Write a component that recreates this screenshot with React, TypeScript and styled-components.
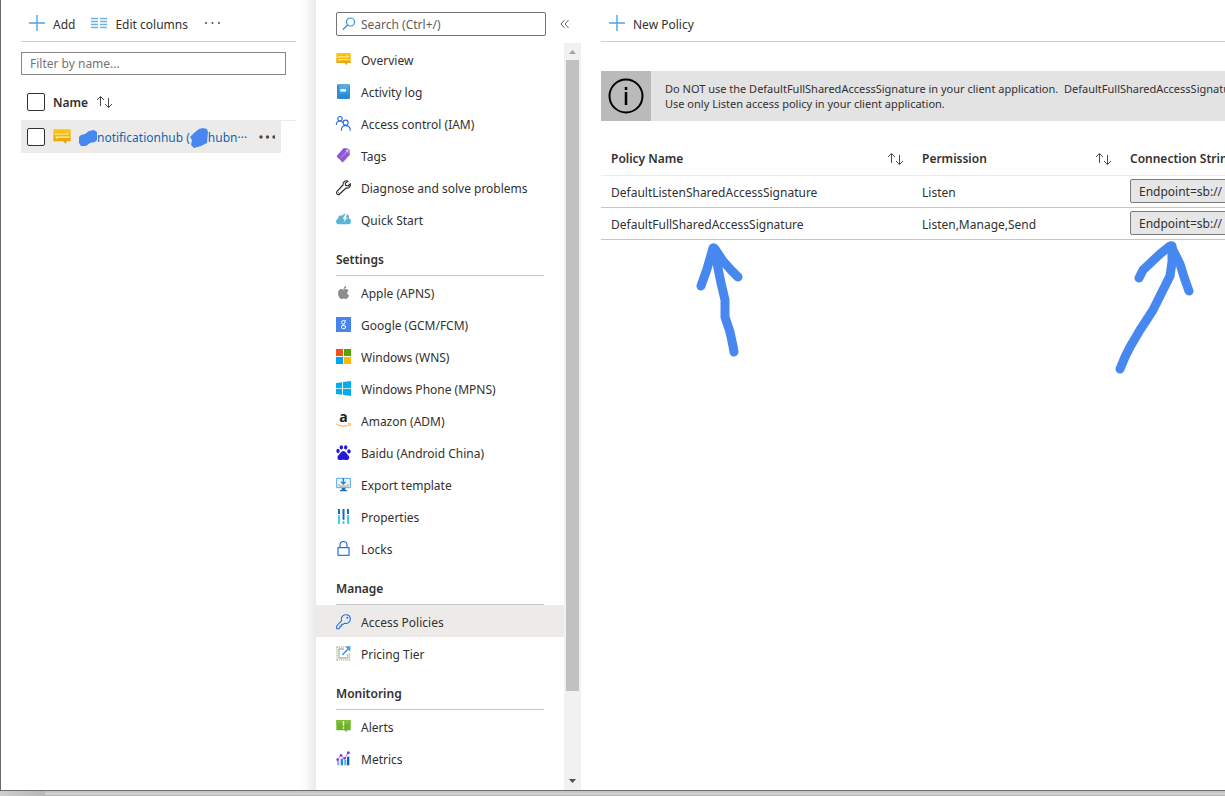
import React from "react";
import styled, { createGlobalStyle } from "styled-components";
import { FaApple } from "react-icons/fa";

const GlobalStyle = createGlobalStyle`
  * { box-sizing: border-box; }
  body {
    margin: 0;
    background: #ffffff;
    color: #323130;
    font-family: "Noto Sans", "Open Sans", sans-serif;
    font-size: 12px;
    line-height: 16px;
    overflow: hidden;
  }
  button, input { font: inherit; color: inherit; }
`;

const Desktop = styled.div`
  display: flex;
  flex-direction: column;
  height: 100vh;
`;

const Portal = styled.div`
  position: relative;
  display: flex;
  flex: 1;
  min-height: 0;
  overflow: hidden;
  border-left: 1px solid #6a6a6a;
  border-bottom: 1px solid #6e6e6e;
`;

const DesktopEdge = styled.div`
  display: flex;
  height: 5px;
  background: linear-gradient(#c2c2c2, #d4d4d4 80%, #b4b4b4 80%);
`;

const EdgeShade = styled.div`
  width: 45px;
  background: linear-gradient(90deg, #cfcfcf, #b6b6b6);
`;

const HubPane = styled.section`
  display: flex;
  flex-direction: column;
  flex: 0 0 315px;
  min-width: 0;
  padding: 0 20px;
  background: linear-gradient(90deg, #ffffff 299px, #fafafa 305px, #e9e9e9 315px);
`;

const Toolbar = styled.div`
  display: flex;
  align-items: center;
  gap: 16px;
  height: 42px;
  padding: 8px 8px 0;
  border-bottom: 1px solid #d2d0ce;
`;

const ToolButton = styled.button`
  display: flex;
  align-items: center;
  gap: 8px;
  padding: 0;
  border: 0;
  background: none;
  white-space: nowrap;
  svg { display: block; flex: none; margin-bottom: 4px; }
`;

const FilterInput = styled.input`
  height: 23px;
  margin: 10px 10px 0 0;
  padding: 0 8px;
  border: 1px solid #8a8886;
  background: #ffffff;
  &::placeholder { color: #767472; opacity: 1; }
`;

const CheckBox = styled.input`
  appearance: none;
  flex: none;
  width: 18px;
  height: 18px;
  margin: 0;
  border: 1px solid #323130;
  border-radius: 2px;
  background: #ffffff;
`;

const HubHeader = styled.div`
  display: flex;
  align-items: center;
  gap: 8px;
  height: 46px;
  padding: 8px 6px 0;
  border-bottom: 1px solid #edebe9;
  font-weight: 600;
`;

const HeaderText = styled.span`
  padding-top: 2px;
`;

const HubRow = styled.div`
  display: flex;
  align-items: center;
  gap: 8px;
  height: 32px;
  margin-right: 15px;
  padding-left: 6px;
  background: #edebe9;
  svg { flex: none; }
`;

const HubLink = styled.a`
  display: flex;
  align-items: center;
  flex: 1;
  min-width: 0;
  height: 24px;
  padding-top: 2px;
  color: #0f66b4;
  text-decoration: none;
  white-space: pre;
`;

const DotsButton = styled.button`
  display: flex;
  flex: none;
  width: 22px;
  padding: 0;
  border: 0;
  background: none;
`;

const NavPane = styled.nav`
  display: flex;
  flex-direction: column;
  flex: 0 0 265px;
  background: #ffffff;
`;

const NavTop = styled.div`
  display: flex;
  align-items: center;
  gap: 14px;
  height: 43px;
  padding: 5px 10px 0 20px;
`;

const SearchBox = styled.label`
  display: flex;
  align-items: center;
  gap: 5px;
  flex: 0 0 210px;
  height: 24px;
  padding: 0 5px;
  border: 1px solid #767472;
  border-radius: 2px;
`;

const SearchInput = styled.input`
  flex: 1;
  min-width: 0;
  padding: 2px 0 0;
  border: 0;
  outline: 0;
  background: none;
  &::placeholder { color: #605e5c; opacity: 1; }
`;

const CollapseButton = styled.button`
  display: flex;
  padding: 0;
  border: 0;
  background: none;
`;

const NavScroll = styled.div`
  display: flex;
  flex: 1;
  min-height: 0;
`;

const NavBody = styled.div`
  flex: 1;
  overflow: hidden;
`;

const NavList = styled.ul`
  margin: 0;
  padding: 0;
  list-style: none;
`;

const NavLink = styled.a<{ $active?: boolean }>`
  display: flex;
  align-items: center;
  gap: 10px;
  height: 32px;
  padding: 3px 0 0 20px;
  color: inherit;
  text-decoration: none;
  background: ${(p) => (p.$active ? "#edebe9" : "transparent")};
  svg { display: block; flex: none; margin-bottom: 2px; overflow: visible; }
`;

const NavHeading = styled.h2`
  height: 41px;
  margin: 0 20px;
  padding-top: 17px;
  border-bottom: 1px solid #c8c6c4;
  font-size: 12px;
  font-weight: 600;
`;

const ScrollTrack = styled.div`
  display: flex;
  flex-direction: column;
  align-items: center;
  flex: 0 0 17px;
  background: #f1f1f1;
`;

const ScrollArrow = styled.svg`
  display: block;
  flex: none;
  width: 17px;
  height: 17px;
`;

const ScrollThumb = styled.div`
  flex: 631;
  width: 13px;
  background: #c1c1c1;
`;

const ScrollRest = styled.div`
  flex: 82;
`;

const MainPane = styled.main`
  flex: 1;
  min-width: 0;
  padding-left: 20px;
  overflow: hidden;
  background: #ffffff;
`;

const Notice = styled.div`
  display: flex;
  height: 50px;
  margin-top: 29px;
  background: #e3e3e3;
`;

const NoticeIcon = styled.div`
  display: flex;
  align-items: center;
  justify-content: center;
  flex: 0 0 50px;
  background: #bababa;
`;

const NoticeText = styled.p`
  margin: 0;
  padding: 10px 14px;
  font-size: 11px;
  line-height: 15px;
  white-space: pre;
`;

const PolicyTable = styled.table`
  width: 100%;
  min-width: 780px;
  margin-top: 20px;
  border-collapse: separate;
  border-spacing: 0;
  table-layout: fixed;
`;

const HeadCell = styled.th<{ $width?: number }>`
  width: ${(p) => (p.$width ? `${p.$width}px` : "auto")};
  height: 35px;
  padding: 2px 9px 0 10px;
  border-bottom: 1px solid #edebe9;
  font-weight: 600;
  text-align: left;
  white-space: nowrap;
`;

const HeadLabel = styled.div`
  display: flex;
  align-items: center;
  justify-content: space-between;
`;

const Cell = styled.td<{ $field?: boolean }>`
  height: 32px;
  padding: ${(p) => (p.$field ? "0 10px 1px" : "2px 10px 0")};
  border-bottom: 1px solid #c8c6c4;
  white-space: nowrap;
`;

const EndpointInput = styled.input`
  display: block;
  width: 100%;
  height: 24px;
  padding: 0 8px;
  border: 1px solid #7c7a78;
  border-radius: 2px;
  background: #e6e6e6;
`;

const PenMarks = styled.svg`
  position: absolute;
  top: 0;
  left: 0;
  pointer-events: none;
`;

/* Icons */

const Icon = ({ children, size = 15 }: { children: React.ReactNode; size?: number }) => (
  <svg width={size} height={size} viewBox="0 0 45 45" fill="none" aria-hidden="true">
    {children}
  </svg>
);

const HubIcon = ({ size = 15 }: { size?: number }) => (
  <Icon size={size}>
    <defs>
      <linearGradient id="hub" x1="0" y1="0" x2="0" y2="1">
        <stop offset="0" stopColor="#fccb05" />
        <stop offset="1" stopColor="#e59a08" />
      </linearGradient>
    </defs>
    <path d="M1 3h43v30H33v7l-8-7H1z" fill="url(#hub)" />
    <path d="M4 15h34M7 23h34" stroke="#fff3c4" strokeWidth="3" />
    <path d="M33 10l6 5M12 28l-6-5" stroke="#fff3c4" strokeWidth="2" />
  </Icon>
);

const LogIcon = () => (
  <Icon>
    <defs>
      <linearGradient id="book" x1="0" y1="0" x2="0" y2="1">
        <stop offset="0" stopColor="#5ab1ec" />
        <stop offset="1" stopColor="#1c84d8" />
      </linearGradient>
    </defs>
    <rect x="3" y="1" width="39" height="44" rx="4" fill="#3b87c8" />
    <rect x="8" y="3" width="32" height="40" rx="2" fill="url(#book)" />
    <rect x="13" y="15" width="17" height="8" fill="#eef8ff" />
  </Icon>
);

const PeopleIcon = () => (
  <Icon>
    <g stroke="#2b6fdc" strokeWidth="3.4">
      <circle cx="12" cy="8" r="6.5" />
      <path d="M1 27c0-8 4-12 11-12 4 0 7 2 9 5" />
      <circle cx="29" cy="20" r="7.5" />
      <path d="M16 44c0-9 4-15 13-15s14 6 14 15" />
    </g>
  </Icon>
);

const TagIcon = () => (
  <Icon>
    <defs>
      <linearGradient id="tag" x1="0" y1="0" x2="1" y2="1">
        <stop offset="0" stopColor="#7a35e0" />
        <stop offset="1" stopColor="#a678d8" />
      </linearGradient>
    </defs>
    <path d="M23 1l15 1 4 5v14L20 44 2 26z" fill="#b18be0" />
    <path d="M23 1l12 1-2 6L10 33l-8-8z" fill="url(#tag)" />
    <path d="M36 12l4 8-20 22-9-9z" fill="#8f5bc8" />
    <circle cx="33" cy="8" r="2.5" fill="#fff" />
  </Icon>
);

const WrenchIcon = () => (
  <Icon>
    <path
      d="M36 3c-8-3-16 3-15 12L3 34c-5 6 3 13 8 8l19-18c8 2 15-5 13-13l-7 7-7-2-1-6z"
      stroke="#2b2b2b"
      strokeWidth="3.4"
      strokeLinejoin="round"
    />
    <circle cx="8" cy="37" r="1.5" fill="#2b2b2b" />
  </Icon>
);

const CloudIcon = () => (
  <Icon>
    <path
      d="M9 37C-1 37-3 23 6 20 6 11 15 7 19 11c4-8 18-8 20 2 0 4 0 5-1 6 10 3 9 18-1 18z"
      fill="#59b4d9"
    />
    <path d="M29 5L20 20h6l-3 11 12-15h-6l5-11z" fill="#ffffff" />
  </Icon>
);

const GoogleIcon = () => (
  <Icon>
    <rect width="45" height="45" fill="#4684ee" />
    <g stroke="#ffffff" strokeWidth="3">
      <ellipse cx="22" cy="16" rx="5" ry="5.5" />
      <path d="M26 11h4M22 22c-3 2 0 3 3 5" />
      <ellipse cx="22.500" cy="30" rx="6.500" ry="5" />
    </g>
  </Icon>
);

const WindowsIcon = () => (
  <Icon>
    <path d="M0 0h21v21H0z" fill="#f25022" />
    <path d="M24 0h21v21H24z" fill="#57a300" />
    <path d="M0 24h21v21H0z" fill="#00a4ef" />
    <path d="M24 24h21v21H24z" fill="#ffb900" />
  </Icon>
);

const PhoneIcon = () => (
  <Icon>
    <path
      d="M0 6l18-2v18H0zM21 3l24-3v22H21zM0 24h18v17L0 39zM21 24h24v21l-24-3z"
      fill="#00adef"
    />
  </Icon>
);

const AmazonLetter = styled.text`
  font: 700 42px "Open Sans", sans-serif;
`;

const AmazonIcon = () => (
  <Icon>
    <AmazonLetter x="10" y="27" fill="#1d1d1d">a</AmazonLetter>
    <path d="M1 33c12 8 27 9 38 2" stroke="#ff9f1c" strokeWidth="3" />
    <path d="M36 32l8 0-2 7" stroke="#ff9f1c" strokeWidth="2.500" />
  </Icon>
);

const BaiduIcon = () => (
  <Icon>
    <g fill="#2319dc">
      <ellipse cx="6" cy="18" rx="5" ry="6.500" />
      <ellipse cx="16" cy="7" rx="5" ry="6.500" />
      <ellipse cx="29" cy="7" rx="5" ry="6.500" />
      <ellipse cx="39" cy="19" rx="5" ry="6.500" />
      <path d="M22 18c7 0 8 7 13 11 7 5 6 16-3 16-4 0-6-1-10-1s-6 1-10 1C3 45 2 34 9 29c5-4 6-11 13-11z" />
    </g>
  </Icon>
);

const ExportIcon = () => (
  <Icon>
    <path d="M2 4h41v28H2z" fill="#e8f4fd" stroke="#5aa9e0" strokeWidth="3" />
    <path d="M22 3v18M15 14l7 7 7-7" stroke="#1f86d6" strokeWidth="4" />
    <path d="M9 21v6h27v-6" stroke="#a6a6a6" strokeWidth="3" />
    <path d="M17 33h11v6h5v4H12v-4h5z" fill="#2271b8" />
  </Icon>
);

const PropertiesIcon = () => (
  <Icon>
    <path d="M6 0h6v15H6zM19.500 0h6v32h-6zM33 0h6v15h-6z" fill="#0f6fc6" />
    <path d="M6 18h6v27H6zM19.500 36h6v9h-6zM33 18h6v27h-6z" fill="#45cdea" />
  </Icon>
);

const LockIcon = () => (
  <Icon>
    <rect x="6" y="20" width="33" height="23" stroke="#1a6ad8" strokeWidth="3.4" />
    <path d="M12 20v-8c0-14 21-14 21 0v8" stroke="#1a6ad8" strokeWidth="3.4" />
  </Icon>
);

const KeyIcon = () => (
  <Icon>
    <path
      d="M17 20C13 9 21 2 30 2c8 0 13 6 13 13 0 9-8 16-18 13l-3 3h-5v5h-5v5l-3 3H2v-8z"
      stroke="#1f6be0"
      strokeWidth="3.2"
      strokeLinejoin="round"
    />
    <circle cx="34" cy="11" r="3" fill="#1f6be0" />
  </Icon>
);

const TierIcon = () => (
  <Icon>
    <path d="M2 3h22M3 3v40M2 42h39M41 22v21" stroke="#8bc34a" strokeWidth="3" strokeDasharray="4 2" />
    <path d="M24 9H9v27h26V24" stroke="#b5b5b5" strokeWidth="4" />
    <path d="M19 27L36 9" stroke="#3a9de6" strokeWidth="5" />
    <path d="M27 1h16v16z" fill="#3a9de6" />
  </Icon>
);

const AlertIcon = () => (
  <Icon>
    <path d="M1 3h43v31H32v6l-7-6H1z" fill="#6fb12b" />
    <path d="M1 3h43v10H1z" fill="#7fbf35" />
    <path d="M22.500 6v15M22.500 25v4" stroke="#ffffff" strokeWidth="4" />
  </Icon>
);

const MetricsIcon = () => (
  <Icon>
    <path d="M3 30h7v13H3z" fill="#83b9f9" />
    <path d="M14 23h7v20h-7z" fill="#2b88d8" />
    <path d="M25 27h6v16h-6z" fill="#5ea0ef" />
    <path d="M33 17h7v26h-7z" fill="#1162ad" />
    <path d="M5 26l10-13 11 9L37 4" stroke="#b07fe8" strokeWidth="3" />
    <g fill="#7f3fdc">
      <circle cx="5" cy="26" r="4" />
      <circle cx="15" cy="13" r="4" />
      <circle cx="26" cy="22" r="4" />
      <circle cx="37" cy="5" r="4.500" />
    </g>
  </Icon>
);

const PlusIcon = () => (
  <svg width="16" height="16" viewBox="0 0 16 16" aria-hidden="true">
    <path d="M8 0v16M0 8h16" stroke="#4fa3e3" strokeWidth="1.400" />
  </svg>
);

const ColumnsIcon = () => (
  <svg width="16" height="12" viewBox="0 0 16 12" aria-hidden="true">
    <path
      d="M0 1.500h7M9 1.500h7M0 4.500h7M9 4.500h7M0 7.500h7M9 7.500h7M0 10.500h7M9 10.500h7"
      stroke="#6fb2e8"
      strokeWidth="1.400"
    />
  </svg>
);

const Dots = ({ r }: { r: number }) => (
  <svg width="16" height="6" viewBox="0 0 16 6" fill="#4a4948" aria-hidden="true">
    <circle cx="2" cy="3" r={r} />
    <circle cx="8.500" cy="3" r={r} />
    <circle cx="15" cy="3" r={r} />
  </svg>
);

const SortIcon = () => (
  <svg width="16" height="12" viewBox="0 0 16 12" fill="none" stroke="#4a4948" aria-hidden="true">
    <path d="M4.500 10V.8M1 4l3.500-3.500L8 4M12.500 2v9.500M9 8l3.500 3.500L16 8" />
  </svg>
);

const SearchIcon = () => (
  <svg width="14" height="14" viewBox="0 0 14 14" fill="none" stroke="#3c8fd8" aria-hidden="true">
    <circle cx="8.500" cy="5" r="4" strokeWidth="1.200" />
    <path d="M5.500 8L.8 12.700" strokeWidth="1.300" />
  </svg>
);

const CollapseIcon = () => (
  <svg width="10" height="10" viewBox="0 0 10 10" fill="none" stroke="#605e5c" aria-hidden="true">
    <path d="M4.500 1L1 5l3.500 4M8.500 1L5 5l3.500 4" />
  </svg>
);

const Scribble = ({ tall }: { tall?: boolean }) => (
  <svg width="18" height="20" viewBox="0 0 18 20" aria-hidden="true">
    <path
      d={
        tall
          ? "M0 9l4-4 5-4 4-1 4 1 1 3-1 11-6 3-7 2-3-3 1-5z"
          : "M0 9l2-2 4-1 4-3 5-1 3 2v8l-2 2-5 1-4 3H2l-2-3z"
      }
      fill="#4787f0"
    />
  </svg>
);

type Item = { label: string; icon: React.ReactNode; active?: boolean };

const sections: { title?: string; items: Item[] }[] = [
  {
    items: [
      { label: "Overview", icon: <HubIcon /> },
      { label: "Activity log", icon: <LogIcon /> },
      { label: "Access control (IAM)", icon: <PeopleIcon /> },
      { label: "Tags", icon: <TagIcon /> },
      { label: "Diagnose and solve problems", icon: <WrenchIcon /> },
      { label: "Quick Start", icon: <CloudIcon /> },
    ],
  },
  {
    title: "Settings",
    items: [
      { label: "Apple (APNS)", icon: <FaApple size={15} color="#8c8c8c" /> },
      { label: "Google (GCM/FCM)", icon: <GoogleIcon /> },
      { label: "Windows (WNS)", icon: <WindowsIcon /> },
      { label: "Windows Phone (MPNS)", icon: <PhoneIcon /> },
      { label: "Amazon (ADM)", icon: <AmazonIcon /> },
      { label: "Baidu (Android China)", icon: <BaiduIcon /> },
      { label: "Export template", icon: <ExportIcon /> },
      { label: "Properties", icon: <PropertiesIcon /> },
      { label: "Locks", icon: <LockIcon /> },
    ],
  },
  {
    title: "Manage",
    items: [
      { label: "Access Policies", icon: <KeyIcon />, active: true },
      { label: "Pricing Tier", icon: <TierIcon /> },
    ],
  },
  {
    title: "Monitoring",
    items: [
      { label: "Alerts", icon: <AlertIcon /> },
      { label: "Metrics", icon: <MetricsIcon /> },
    ],
  },
];

const policies = [
  { name: "DefaultListenSharedAccessSignature", permission: "Listen" },
  { name: "DefaultFullSharedAccessSignature", permission: "Listen,Manage,Send" },
];

export default function App() {
  return (
    <Desktop>
      <GlobalStyle />
      <Portal>
        <HubPane>
          <Toolbar>
            <ToolButton><PlusIcon />Add</ToolButton>
            <ToolButton><ColumnsIcon />Edit columns</ToolButton>
            <ToolButton aria-label="More commands"><Dots r={1} /></ToolButton>
          </Toolbar>
          <FilterInput aria-label="Filter by name" placeholder="Filter by name..." />
          <HubHeader>
            <CheckBox type="checkbox" aria-label="Select all" />
            <HeaderText>Name</HeaderText>
            <SortIcon />
          </HubHeader>
          <HubRow>
            <CheckBox type="checkbox" aria-label="Select hub" />
            <HubIcon size={18} />
            <HubLink href="#hub">
              <Scribble />notificationhub (<Scribble tall />hubn···
            </HubLink>
            <DotsButton aria-label="Row menu"><Dots r={1.7} /></DotsButton>
          </HubRow>
        </HubPane>

        <NavPane>
          <NavTop>
            <SearchBox>
              <SearchIcon />
              <SearchInput aria-label="Search" placeholder="Search (Ctrl+/)" />
            </SearchBox>
            <CollapseButton aria-label="Collapse menu"><CollapseIcon /></CollapseButton>
          </NavTop>
          <NavScroll>
            <NavBody>
              {sections.map((section, i) => (
                <React.Fragment key={i}>
                  {section.title && <NavHeading>{section.title}</NavHeading>}
                  <NavList>
                    {section.items.map((item) => (
                      <li key={item.label}>
                        <NavLink href="#" $active={item.active}>
                          {item.icon}
                          {item.label}
                        </NavLink>
                      </li>
                    ))}
                  </NavList>
                </React.Fragment>
              ))}
            </NavBody>
            <ScrollTrack>
              <ScrollArrow viewBox="0 0 17 17"><path d="M5 11l3.500-4 3.500 4z" fill="#a3a3a3" /></ScrollArrow>
              <ScrollThumb />
              <ScrollRest />
              <ScrollArrow viewBox="0 0 17 17"><path d="M5 6l3.500 4L12 6z" fill="#505050" /></ScrollArrow>
            </ScrollTrack>
          </NavScroll>
        </NavPane>

        <MainPane>
          <Toolbar>
            <ToolButton><PlusIcon />New Policy</ToolButton>
          </Toolbar>
          <Notice role="note">
            <NoticeIcon>
              <svg width="36" height="36" viewBox="0 0 36 36" fill="none" stroke="#000000" aria-hidden="true">
                <circle cx="18" cy="18" r="16.500" strokeWidth="2" />
                <path d="M18 9v3M18 14v13" strokeWidth="2.500" />
              </svg>
            </NoticeIcon>
            <NoticeText>
              {"Do NOT use the DefaultFullSharedAccessSignature in your client application.  DefaultFullSharedAccessSignature\nUse only Listen access policy in your client application."}
            </NoticeText>
          </Notice>
          <PolicyTable>
            <thead>
              <tr>
                <HeadCell $width={311}><HeadLabel>Policy Name<SortIcon /></HeadLabel></HeadCell>
                <HeadCell $width={208}><HeadLabel>Permission<SortIcon /></HeadLabel></HeadCell>
                <HeadCell>Connection String</HeadCell>
              </tr>
            </thead>
            <tbody>
              {policies.map((policy) => (
                <tr key={policy.name}>
                  <Cell>{policy.name}</Cell>
                  <Cell>{policy.permission}</Cell>
                  <Cell $field>
                    <EndpointInput readOnly aria-label={`Connection string for ${policy.name}`} value="Endpoint=sb://" />
                  </Cell>
                </tr>
              ))}
            </tbody>
          </PolicyTable>
        </MainPane>

        <PenMarks width="1224" height="400" viewBox="1 0 1224 400" fill="none" stroke="#4787f0" strokeWidth="9" strokeLinecap="round" strokeLinejoin="round">
          <path d="M714 248l7 35 4 17v17l5 15 3 14 1 6" />
          <path d="M713 248l-6 21-6 17M715 249l8 12 8 9 7 7" />
          <path d="M1172 246v16l-2 14-8 16-9 18-13 20-10 17-5 10-5 12" />
          <path d="M1170 246l-10 8-17 16-4 8M1171 246l9 18 5 16 4 11" />
        </PenMarks>
      </Portal>
      <DesktopEdge><EdgeShade /></DesktopEdge>
    </Desktop>
  );
}
